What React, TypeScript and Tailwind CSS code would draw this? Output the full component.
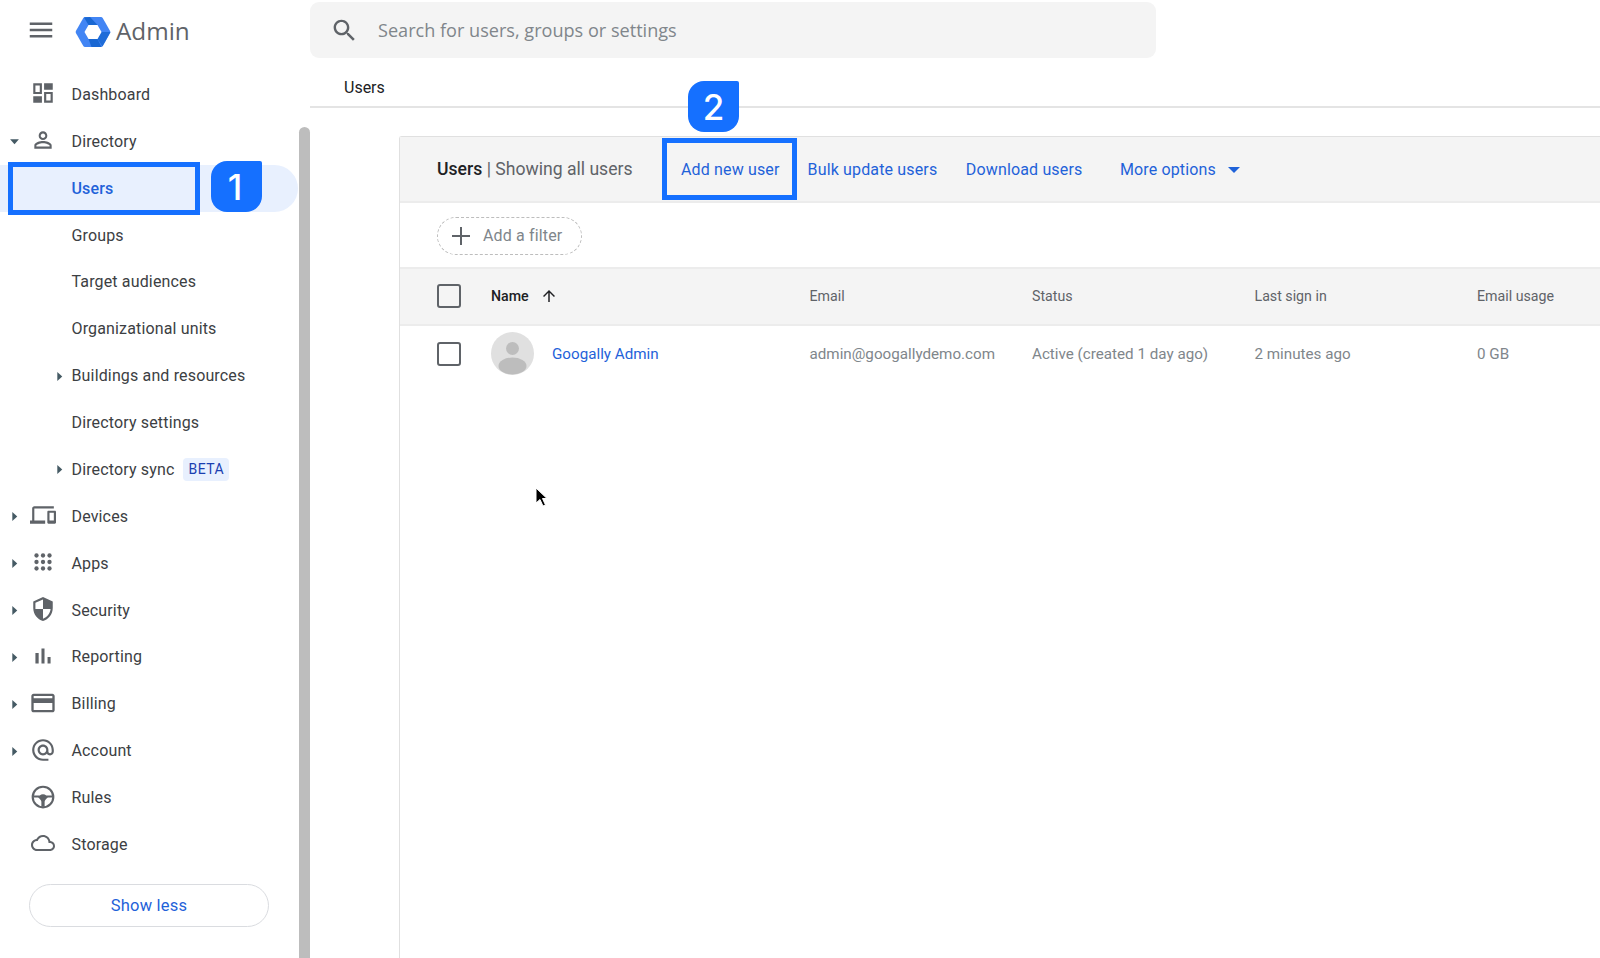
import type { ReactNode } from "react";

const paths = {
  menu: "M3 18h18v-2H3v2zm0-5h18v-2H3v2zm0-7v2h18V6H3z",
  search:
    "M15.5 14h-.79l-.28-.27C15.41 12.59 16 11.11 16 9.5 16 5.91 13.09 3 9.5 3S3 5.91 3 9.5 5.91 16 9.5 16c1.61 0 3.09-.59 4.23-1.57l.27.28v.79l5 4.99L20.49 19l-4.99-5zm-6 0C7.01 14 5 11.99 5 9.5S7.01 5 9.5 5 14 7.01 14 9.5 11.99 14 9.5 14z",
  dashboard:
    "M3 3h8v10H3V3zm2 2v6h4V5H5zm8-2h8v6h-8V3zM3 15h8v6H3v-6zm10-4h8v10h-8V11zm2 2v6h4v-6h-4z",
  person:
    "M12 5.9c1.16 0 2.1.94 2.1 2.1s-.94 2.1-2.1 2.1S9.9 9.16 9.9 8s.94-2.1 2.1-2.1m0 9c2.97 0 6.1 1.46 6.1 2.1v1.1H5.9V17c0-.64 3.13-2.1 6.1-2.1M12 4C9.79 4 8 5.79 8 8s1.79 4 4 4 4-1.79 4-4-1.79-4-4-4zm0 9c-2.67 0-8 1.34-8 4v3h16v-3c0-2.66-5.33-4-8-4z",
  devices:
    "M4 6h18V4H4c-1.1 0-2 .9-2 2v11H0v3h14v-3H4V6zm19 2h-6c-.55 0-1 .45-1 1v10c0 .55.45 1 1 1h6c.55 0 1-.45 1-1V9c0-.55-.45-1-1-1zm-1 9h-4v-7h4v7z",
  security:
    "M12 1L3 5v6c0 5.55 3.84 10.74 9 12 5.16-1.26 9-6.45 9-12V5l-9-4zm0 10.99h7c-.53 4.12-3.28 7.79-7 8.94V12H5V6.3l7-3.11v8.8z",
  reporting: "M5 9.2h3V19H5zM10.6 5h2.8v14h-2.8zm5.6 8H19v6h-2.8z",
  billing:
    "M20 4H4c-1.11 0-1.99.89-1.99 2L2 18c0 1.11.89 2 2 2h16c1.11 0 2-.89 2-2V6c0-1.11-.89-2-2-2zm0 14H4v-6h16v6zm0-10H4V6h16v2z",
  account:
    "M12 2C6.48 2 2 6.48 2 12s4.48 10 10 10h5v-2h-5c-4.34 0-8-3.66-8-8s3.66-8 8-8 8 3.66 8 8v1.43c0 .79-.71 1.57-1.5 1.57s-1.5-.78-1.5-1.57V12c0-2.76-2.24-5-5-5s-5 2.24-5 5 2.24 5 5 5c1.38 0 2.64-.56 3.54-1.47.65.89 1.77 1.47 2.96 1.47 1.97 0 3.5-1.6 3.5-3.57V12c0-5.52-4.48-10-10-10zm0 13c-1.66 0-3-1.34-3-3s1.34-3 3-3 3 1.34 3 3-1.34 3-3 3z",
  storage:
    "M19.35 10.04C18.67 6.59 15.64 4 12 4 9.11 4 6.6 5.64 5.35 8.04 2.34 8.36 0 10.91 0 14c0 3.31 2.69 6 6 6h13c2.76 0 5-2.24 5-5 0-2.64-2.05-4.78-4.65-4.96zM19 18H6c-2.21 0-4-1.79-4-4s1.79-4 4-4h.71C7.37 7.69 9.48 6 12 6c3.04 0 5.5 2.46 5.5 5.5v.5H19c1.66 0 3 1.34 3 3s-1.34 3-3 3z",
};

function Icon({ d, className }: { d: string; className?: string }) {
  return (
    <svg viewBox="0 0 24 24" className={className} fill="currentColor" fillRule="evenodd">
      <path d={d} />
    </svg>
  );
}

function AppsIcon() {
  const dots = [6, 12, 18];
  return (
    <svg viewBox="0 0 24 24" className="h-[26px] w-[26px] text-[#5f6368]" fill="currentColor">
      {dots.map((y) => dots.map((x) => <circle key={`${x}-${y}`} cx={x} cy={y} r="2" />))}
    </svg>
  );
}

function RulesIcon() {
  return (
    <svg viewBox="0 0 24 24" className="h-[26px] w-[26px] text-[#5f6368]" fill="currentColor">
      <circle cx="12" cy="12" r="9.5" fill="none" stroke="currentColor" strokeWidth="2" />
      <path d="M3 10.5h6c.8-.6 1.900-1 3-1s2.200.4 3 1h6v2h-4.500c-.8.3-1.500 1.300-2.500 2.500-.3.5-.5 1-.5 1.500v4.500h-3v-4.500c0-.5-.2-1-.5-1.500-1-1.200-1.700-2.200-2.500-2.500H3z" />
    </svg>
  );
}

function Caret({ down }: { down?: boolean }) {
  return (
    <svg viewBox="0 0 10 10" className="h-[11px] w-[11px] text-[#455a64]" fill="currentColor">
      {down ? <path d="M1 3h8L5 7.500z" /> : <path d="M3 1v8l4.500-4z" />}
    </svg>
  );
}

function TopItem({
  label,
  icon,
  caret,
}: {
  label: string;
  icon: ReactNode;
  caret?: "right" | "down";
}) {
  return (
    <div className="flex h-[46.875px] items-center">
      <span className="flex w-[28px] justify-center">
        {caret && <Caret down={caret === "down"} />}
      </span>
      <span className="flex w-[30px] justify-center pb-[3px]">{icon}</span>
      <span className="ml-[13.5px] text-[16px] tracking-[0.15px] text-[#3c4043]">{label}</span>
    </div>
  );
}

function SubItem({
  label,
  caret,
  badge,
  active,
}: {
  label: string;
  caret?: boolean;
  badge?: string;
  active?: boolean;
}) {
  return (
    <div
      className={
        active
          ? "flex h-[46.875px] w-[298px] items-center rounded-r-full bg-[#e8f0fe]"
          : "flex h-[46.875px] items-center"
      }
    >
      <span className="flex w-[71.5px] justify-end pr-[7px]">{caret && <Caret />}</span>
      <span
        className={
          active
            ? "text-[16px] font-medium tracking-[0.15px] text-[#1f62d9]"
            : "text-[16px] tracking-[0.15px] text-[#3c4043]"
        }
      >
        {label}
      </span>
      {badge && (
        <span className="ml-[9px] rounded-[4px] bg-[#e8f0fe] px-[5px] py-[1px] text-[14px] tracking-[0.5px] text-[#1a3fb0]">
          {badge}
        </span>
      )}
    </div>
  );
}

function Logo() {
  return (
    <svg viewBox="0 0 36 32" className="block h-[32px] w-[36px]">
      <path
        d="M10 1h16c.7 0 1.300.4 1.700 1l7.400 13c.3.6.3 1.400 0 2l-7.400 13c-.4.6-1 1-1.700 1H10c-.7 0-1.300-.4-1.700-1L.9 17c-.3-.6-.3-1.400 0-2L8.300 2c.4-.6 1-1 1.700-1z"
        fill="#4285f4"
      />
      <path d="M9 1.600 13.500 9h9L15 1z" fill="#1967d2" />
      <path d="M26.500 16h9l-8 14.500L22.500 23z" fill="#1967d2" opacity="0.85" />
      <path d="M13.500 23h9l4 8h-10z" fill="#1967d2" />
      <path d="M9.500 16l4-7h9l4 7-4 7h-9z" fill="#fff" />
    </svg>
  );
}

function Checkbox() {
  return <span className="block h-[24px] w-[24px] shrink-0 rounded-[3px] border-2 border-[#5f6368]" />;
}

function Sidebar() {
  const ic = "h-[26px] w-[26px] text-[#5f6368]";
  return (
    <aside className="flex w-[310px] shrink-0">
      <div className="w-[299px]">
        <div className="flex h-[71.5px] items-center pb-[11px]">
          <Icon d={paths.menu} className="ml-[26px] h-[30px] w-[30px] text-[#5f6368]" />
          <span className="ml-[19px] pt-[4px]">
            <Logo />
          </span>
          <span className="ml-[5px] pt-[1px] font-['Open_Sans'] text-[24.3px] leading-none text-[#5f6368]">
            Admin
          </span>
        </div>
        <TopItem label="Dashboard" icon={<Icon d={paths.dashboard} className={ic} />} />
        <TopItem label="Directory" caret="down" icon={<Icon d={paths.person} className={ic} />} />
        <SubItem label="Users" active />
        <SubItem label="Groups" />
        <SubItem label="Target audiences" />
        <SubItem label="Organizational units" />
        <SubItem label="Buildings and resources" caret />
        <SubItem label="Directory settings" />
        <SubItem label="Directory sync" caret badge="BETA" />
        <TopItem label="Devices" caret="right" icon={<Icon d={paths.devices} className={ic} />} />
        <TopItem label="Apps" caret="right" icon={<AppsIcon />} />
        <TopItem label="Security" caret="right" icon={<Icon d={paths.security} className={ic} />} />
        <TopItem label="Reporting" caret="right" icon={<Icon d={paths.reporting} className={ic} />} />
        <TopItem label="Billing" caret="right" icon={<Icon d={paths.billing} className="h-[28px] w-[28px] text-[#5f6368]" />} />
        <TopItem label="Account" caret="right" icon={<Icon d={paths.account} className={ic} />} />
        <TopItem label="Rules" icon={<RulesIcon />} />
        <TopItem label="Storage" icon={<Icon d={paths.storage} className="h-[24px] w-[24px] text-[#5f6368]" />} />
        <button className="ml-[29px] mt-[16px] h-[43px] w-[240px] rounded-full border border-[#dadce0] text-[16.5px] tracking-[0.2px] text-[#1f62d9]">
          Show less
        </button>
      </div>
      <div className="w-[11px] pt-[127px]">
        <div className="h-full w-full rounded-t-[6px] bg-[#bdbdbd]" />
      </div>
    </aside>
  );
}

function UsersTable() {
  const link = "shrink-0 text-[16px] tracking-[0.15px] text-[#1f62d9]";
  const head = "w-[222.5px] shrink-0 text-[14.2px] text-[#5f6368]";
  const cell = "w-[222.5px] shrink-0 text-[15.2px] text-[#80868b]";
  return (
    <section className="ml-[89px] mt-[28px] flex-1 rounded-tl-[3px] border-l border-t border-[#e0e0e0]">
      <div className="flex h-[66px] items-center border-b-2 border-[#ececec] bg-[#f4f4f4] pl-[37px] pt-[1px]">
        <span className="w-[244px] shrink-0 text-[17.6px] text-[#5f6368]">
          <span className="font-medium text-[#202124]">Users</span> | Showing all users
        </span>
        <span className={link}>Add new user</span>
        <span className={`ml-[28px] ${link}`}>Bulk update users</span>
        <span className={`ml-[28.500px] ${link}`}>Download users</span>
        <span className={`ml-[37.500px] ${link}`}>More options</span>
        <svg viewBox="0 0 12 8" className="ml-[12px] h-[8px] w-[12px] text-[#1f62d9]" fill="currentColor">
          <path d="M0 1h12L6 7z" />
        </svg>
      </div>
      <div className="flex h-[64px] items-center pl-[37px] pt-[1px]">
        <span className="flex h-[38px] w-[145px] items-center rounded-full border border-dashed border-[#bdbdbd] pl-[14px] text-[16px] tracking-[0.15px] text-[#80868b]">
          <svg viewBox="0 0 18 18" className="h-[18px] w-[18px] text-[#5f6368]" fill="currentColor">
            <path d="M8 0h2v8h8v2h-8v8H8v-8H0V8h8z" />
          </svg>
          <span className="ml-[13px]">Add a filter</span>
        </span>
      </div>
      <div className="flex h-[59px] items-center border-y-2 border-[#ececec] bg-[#f4f4f4] pl-[37px]">
        <span className="-mt-[2px]">
          <Checkbox />
        </span>
        <span className="ml-[30px] flex w-[318.500px] shrink-0 items-center text-[14.2px] font-medium text-[#202124]">
          Name
          <svg viewBox="0 0 24 24" className="ml-[11px] h-[18px] w-[18px]" fill="currentColor">
            <path d="M4 12l1.410 1.410L11 7.830V20h2V7.830l5.580 5.590L20 12l-8-8-8 8z" />
          </svg>
        </span>
        <span className={head}>Email</span>
        <span className={head}>Status</span>
        <span className={head}>Last sign in</span>
        <span className={head}>Email usage</span>
      </div>
      <div className="flex h-[56px] items-center pl-[37px]">
        <Checkbox />
        <span className="ml-[30px] flex w-[318.500px] shrink-0 items-center">
          <svg viewBox="0 0 43 43" className="-mt-[1px] h-[43px] w-[43px]">
            <circle cx="21.500" cy="21.500" r="21.500" fill="#e0e0e0" />
            <circle cx="21.500" cy="16.500" r="6.500" fill="#bdbdbd" />
            <ellipse cx="21.500" cy="34" rx="14" ry="8.500" fill="#bdbdbd" />
          </svg>
          <span className="ml-[18px] text-[15.2px] text-[#1f62d9]">Googally Admin</span>
        </span>
        <span className={cell}>admin@googallydemo.com</span>
        <span className={cell}>Active (created 1 day ago)</span>
        <span className={cell}>2 minutes ago</span>
        <span className={cell}>0 GB</span>
      </div>
    </section>
  );
}

function Callout({ n, className }: { n: string; className: string }) {
  return (
    <div
      className={`absolute flex h-[51px] w-[51px] items-center justify-center rounded-[16px] rounded-tr-[2px] bg-[#1570ff] pt-[1px] font-['Inter'] text-[35px] font-medium text-white ${className}`}
    >
      {n}
    </div>
  );
}

export default function App() {
  return (
    <div className="relative flex h-[958px] w-[1600px] overflow-hidden bg-white font-['Roboto',sans-serif]">
      <Sidebar />
      <main className="flex min-w-0 flex-1 flex-col">
        <div className="mt-[2px] flex h-[56px] w-[846px] items-center rounded-[9px] bg-[#f4f4f4] pl-[20px]">
          <Icon d={paths.search} className="h-[29px] w-[29px] text-[#5f6368]" />
          <span className="ml-[19px] pt-[1px] font-['Open_Sans'] text-[18.1px] text-[#80868b]">
            Search for users, groups or settings
          </span>
        </div>
        <div className="flex h-[50px] items-center border-b-2 border-[#e4e4e4] pl-[34px] pt-[12px] text-[16px] text-[#202124]">
          Users
        </div>
        <UsersTable />
      </main>

      {/* Tutorial annotations drawn on top of the page */}
      <div className="absolute left-[8px] top-[162px] h-[53px] w-[192px] border-[5px] border-[#1570ff]" />
      <Callout n="1" className="left-[211px] top-[161px] pr-[3px]" />
      <div className="absolute left-[662px] top-[138px] h-[62px] w-[135px] border-[5px] border-[#1570ff]" />
      <Callout n="2" className="left-[688px] top-[81px]" />
      <svg viewBox="0 0 14 22" className="absolute left-[535px] top-[487px] h-[22px] w-[14px]">
        <path
          d="M1 1v15l4-3.500 3 6.500 2.500-1-3-6.500H12z"
          fill="#000"
          stroke="#fff"
          strokeWidth="1"
        />
      </svg>
    </div>
  );
}
